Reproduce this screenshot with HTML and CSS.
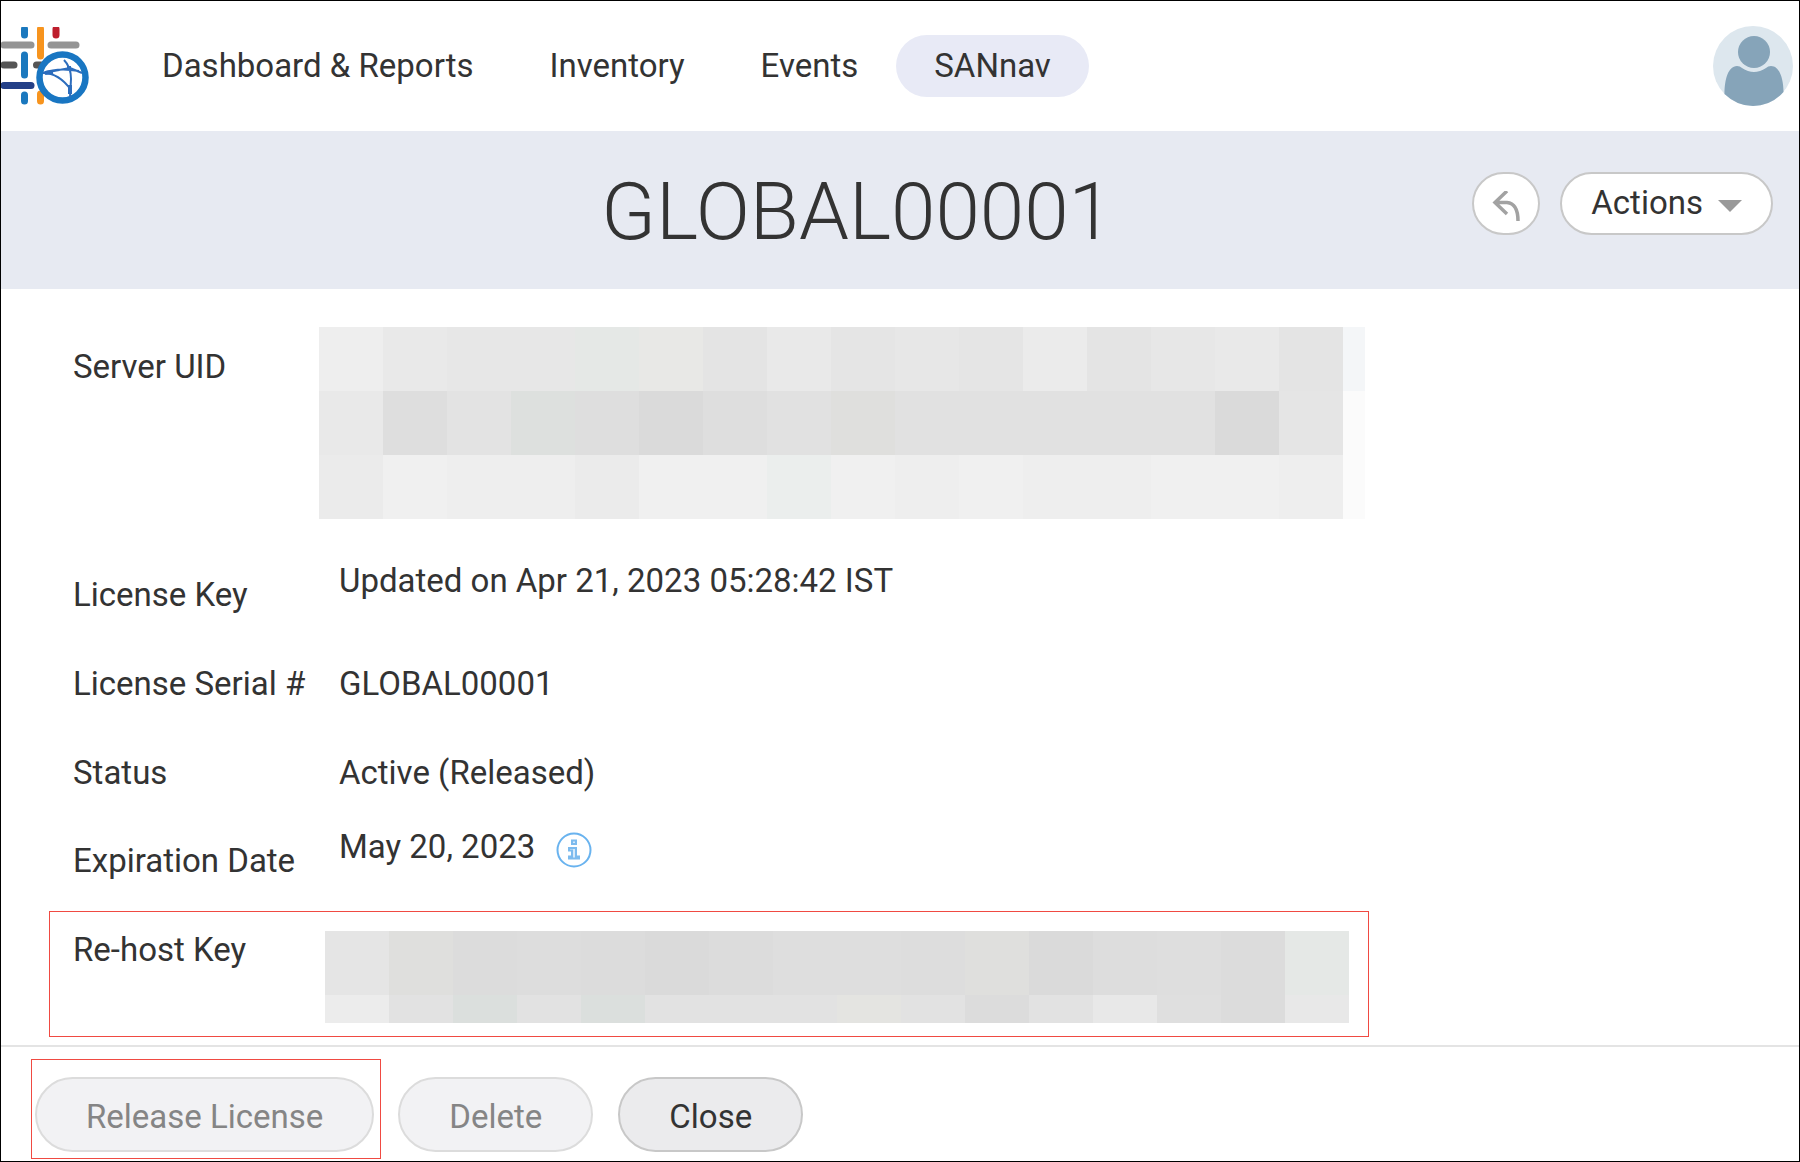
FILE: index.html
```html
<!DOCTYPE html>
<html lang="en">
<head>
<meta charset="utf-8">
<title>SANnav - GLOBAL00001</title>
<link rel="stylesheet" href="styles.css">
</head>
<body>
<div class="shell">
  <header class="topbar">
    <a class="logo" href="#" aria-label="Home">
      <svg viewBox="0 0 89 79" width="89" height="79" aria-hidden="true">
        <g fill="none" stroke-width="7" stroke-linecap="round">
          <path stroke="#1a78be" d="M23.500 2V8M23.500 28V48M23.500 68V74"/>
          <path stroke="#f7941e" d="M39.500 2V29M39.500 67V74"/>
          <path stroke="#be1e2d" d="M55 2V8"/>
          <path stroke="#949494" d="M3 18H30M50 18H75"/>
          <path stroke="#555" d="M3 38H13M35.500 38H40"/>
          <path stroke="#233f87" d="M3 58.500H30"/>
        </g>
        <circle cx="61.500" cy="50.500" r="23" fill="#fff" stroke="#1976c2" stroke-width="6.500"/>
        <g fill="none" stroke="#2d6dbd" stroke-width="2">
          <path d="M42 46Q57 40 78 44M42 46Q58 46 70 63M42 46L69 41M63 33Q70 40 70 52L69 70M69 41L81 46"/>
          <path stroke-width="4" d="M44 46L52 45M69 58V67M68 39V43"/>
        </g>
      </svg>
    </a>
    <nav class="nav">
      <a class="nav-link" href="#">Dashboard &amp; Reports</a>
      <a class="nav-link" href="#">Inventory</a>
      <a class="nav-link" href="#">Events</a>
      <a class="nav-link nav-link-active" href="#" aria-current="page">SANnav</a>
    </nav>
    <a class="avatar" href="#" aria-label="User profile">
      <svg viewBox="0 0 80 80" width="80" height="80" aria-hidden="true">
        <circle cx="40" cy="40" r="40" fill="#dde7ee"/>
        <circle cx="41" cy="26" r="16" fill="#86a4b9"/>
        <path fill="#86a4b9" d="M11.500 68C11.500 54 15 40 24 40Q27 40 29 42Q41 50 53 42Q55 40 58 40C67 40 70.500 54 70.500 66Q58 80 40 80Q24 80 11.500 68Z"/>
      </svg>
    </a>
  </header>

  <div class="titlebar">
    <h1 class="title">GLOBAL00001</h1>
    <div class="title-actions">
      <button class="pill pill-back" type="button" aria-label="Back">
        <svg viewBox="0 0 28 30" width="28" height="30" fill="none" stroke="#a2a2a2" stroke-width="3.500" aria-hidden="true">
          <path d="M15 0L3 11.500L15 23M3 11.500H15Q26 12.500 26 30"/>
        </svg>
      </button>
      <button class="pill pill-actions" type="button" aria-haspopup="menu">
        Actions
        <svg class="caret" viewBox="0 0 24 12" width="24" height="12" aria-hidden="true"><path fill="#999" d="M0 0H24L12 12Z"/></svg>
      </button>
    </div>
  </div>

  <main class="details">
    <div class="row row-uid">
      <div class="label">Server UID</div>
      <svg class="mosaic" viewBox="0 0 1046 192" width="1046" height="192" shape-rendering="crispEdges" role="img" aria-label="Hidden server UID">
        <path fill="#e7e7e7" d="M0 0H1024V64H0Z"/>
        <path fill="#e1e1e1" d="M0 64H1024V128H0Z"/>
        <path fill="#eee" d="M0 128H1024V192H0Z"/>
        <path fill="#eee" d="M0 0h64v64H0z"/>
        <path fill="#e9e9e9" d="M64 0h64v64h-64zM896 0h64v64h-64zM448 0h64v64h-64zM0 64h64v64H0z"/>
        <path fill="#e5e8e6" d="M256 0h64v64h-64z"/>
        <path fill="#e8e8e6" d="M320 0h64v64h-64z"/>
        <path fill="#e4e4e4" d="M384 0h64v64h-64zM768 0h64v64h-64zM960 0h64v64h-64z"/>
        <path fill="#e5e5e5" d="M512 0h64v64h-64zM640 0h64v64h-64zM960 64h64v64h-64z"/>
        <path fill="#ebebeb" d="M704 0h64v64h-64zM0 128h64v64H0zM256 128h64v64h-64z"/>
        <path fill="#dedede" d="M64 64h64v64h-64zM256 64h64v64h-64zM384 64h64v64h-64z"/>
        <path fill="#e3e3e3" d="M128 64h64v64h-64z"/>
        <path fill="#dde0de" d="M192 64h64v64h-64z"/>
        <path fill="#dadada" d="M320 64h64v64h-64zM896 64h64v64h-64z"/>
        <path fill="#dfdfdd" d="M512 64h64v64h-64z"/>
        <path fill="#f0f0f0" d="M64 128h64v64h-64zM320 128h128v64h-128zM512 128h64v64h-64zM640 128h64v64h-64zM832 128h128v64h-128z"/>
        <path fill="#ebeeed" d="M448 128h64v64h-64z"/>
        <path fill="#f4f6f8" d="M1024 0h22v64h-22z"/>
        <path fill="#fbfbfb" d="M1024 64h22v128h-22z"/>
      </svg>
    </div>
    <div class="row">
      <div class="label">License Key</div>
      <div class="value value-raised">Updated on Apr 21, 2023 05:28:42 IST</div>
    </div>
    <div class="row">
      <div class="label">License Serial #</div>
      <div class="value">GLOBAL00001</div>
    </div>
    <div class="row">
      <div class="label">Status</div>
      <div class="value">Active (Released)</div>
    </div>
    <div class="row row-expiration">
      <div class="label">Expiration Date</div>
      <div class="value value-raised">
        May 20, 2023
        <svg class="info" viewBox="0 0 36 36" width="36" height="36" fill="none" role="img" aria-label="More information">
          <circle cx="18" cy="18" r="16.500" stroke="#69b3ef" stroke-width="2"/>
          <path stroke="#7dbbee" stroke-width="2" fill="#d5e9fa" d="M16 8.500H20V12H16ZM13 16H20V24.500H23V26.500H13V24.500H16V18.500H13Z"/>
        </svg>
      </div>
    </div>
    <div class="row row-rehost">
      <div class="label">Re-host Key</div>
      <svg class="mosaic mosaic-inset" viewBox="0 0 1024 92" width="1024" height="92" shape-rendering="crispEdges" role="img" aria-label="Hidden re-host key">
        <path fill="#dedede" d="M0 0H1024V64H0Z"/>
        <path fill="#e2e2e2" d="M0 64H1024V92H0Z"/>
        <path fill="#e5e5e5" d="M0 0h64v64H0z"/>
        <path fill="#dfdfdd" d="M64 0h64v64h-64zM640 0h64v64h-64z"/>
        <path fill="#dcdcdc" d="M128 0h64v64h-64zM256 0h64v64h-64zM384 0h64v64h-64zM896 0h64v92h-64zM640 64h64v28h-64z"/>
        <path fill="#dadada" d="M320 0h64v64h-64zM704 0h64v64h-64z"/>
        <path fill="#ddd" d="M192 0h64v64h-64zM576 0h64v64h-64zM768 0h64v64h-64z"/>
        <path fill="#e5e8e6" d="M960 0h64v64h-64z"/>
        <path fill="#ececec" d="M0 64h64v28H0z"/>
        <path fill="#dbdfdd" d="M128 64h64v28h-64zM256 64h64v28h-64z"/>
        <path fill="#e4e4e1" d="M512 64h64v28h-64z"/>
        <path fill="#e8e8e8" d="M768 64h64v28h-64zM960 64h64v28h-64z"/>
        <path fill="#dfdfdf" d="M832 64h64v28h-64z"/>
      </svg>
    </div>
  </main>

  <footer class="footer">
    <div class="marked">
      <button class="btn" type="button" disabled>Release License</button>
    </div>
    <div class="btn-group">
      <button class="btn" type="button" disabled>Delete</button>
      <button class="btn" type="button">Close</button>
    </div>
  </footer>
</div>
</body>
</html>
```
FILE: styles.css
```css
*,
*::before,
*::after {
  box-sizing: border-box;
}

body {
  margin: 0;
  background: #fff;
  color: #333;
  font-family: Roboto, "Liberation Sans", sans-serif;
  font-size: 33px;
  line-height: 40px;
}

svg {
  display: block;
  flex: none;
}

button {
  font: inherit;
  color: inherit;
}

.shell {
  display: flex;
  flex-direction: column;
  min-height: 100vh;
  border: 1px solid #000;
}

/* Top navigation */
.topbar {
  display: flex;
  align-items: center;
  min-height: 130px;
  padding-right: 6px;
}

.nav {
  display: flex;
  flex: 1;
  margin-left: 34px;
}

.nav-link {
  padding: 11px 38px;
  border-radius: 31px;
  color: inherit;
  text-decoration: none;
  white-space: nowrap;
}

.nav-link-active {
  background: #e8eaf6;
}

/* Title band */
.titlebar {
  display: grid;
  grid-template-columns: 241px 1fr auto;
  align-items: start;
  min-height: 158px;
  padding: 32px 26px 28px 0;
  background: #e7eaf2;
}

.title {
  grid-column: 2;
  margin: 0;
  font-size: 80px;
  font-weight: 300;
  line-height: 98px;
  text-align: center;
}

.title-actions {
  display: flex;
  gap: 20px;
  padding-top: 9px;
}

.pill {
  display: flex;
  align-items: center;
  justify-content: center;
  gap: 15px;
  height: 63px;
  padding: 0 29px 2px;
  border: 2px solid #c8c8c8;
  border-radius: 32px;
  background: #fff;
}

.pill-back {
  width: 68px;
  padding: 4px 0 0;
}

.caret {
  margin-top: 6px;
}

/* License details */
.details {
  flex: 1;
  padding-left: 48px;
}

.row {
  display: flex;
  align-items: center;
  min-height: 89px;
  padding-left: 24px;
}

.label {
  width: 246px;
  flex: none;
}

.value {
  display: flex;
  align-items: center;
  gap: 21px;
  padding-left: 20px;
}

.value-raised {
  padding-bottom: 28px;
}

.info {
  margin: 3px 0 -3px;
}

.row-uid {
  align-items: flex-start;
  padding-top: 38px;
  padding-bottom: 31px;
}

.row-uid .label {
  padding-top: 20px;
}

.row-expiration {
  min-height: 87px;
}

.row-rehost {
  align-items: flex-start;
  width: fit-content;
  margin: 7px 0 8px;
  padding: 18px 19px 13px 23px;
  border: 1px solid #f04a42;
}

.mosaic-inset {
  margin: 1px 0 0 6px;
}

/* Footer actions */
.footer {
  display: flex;
  align-items: flex-start;
  gap: 17px;
  padding: 12px 30px 2px;
  border-top: 2px solid #e4e4e4;
}

.marked {
  padding: 17px 6px 6px 3px;
  border: 1px solid #f04a42;
}

.btn-group {
  display: flex;
  gap: 25px;
  padding-top: 18px;
}

.btn {
  display: block;
  height: 75px;
  padding: 4px 49px 0;
  border: 2px solid #c8c8c8;
  border-radius: 38px;
  background: #ebebed;
}

.btn:disabled {
  border-color: #dcdcdc;
  background: #f2f2f4;
  color: #858585;
}
```
